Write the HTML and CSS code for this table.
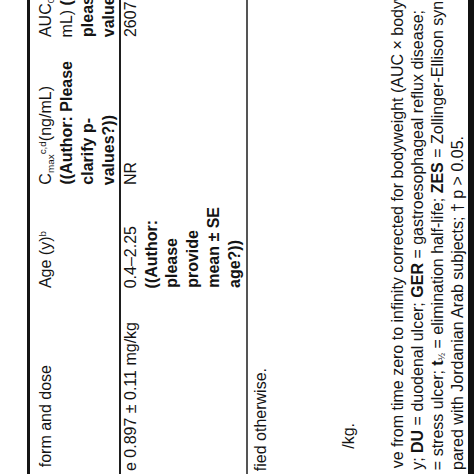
FILE: index.html
```html
<!DOCTYPE html>
<html>
<head>
<meta charset="utf-8">
<link rel="stylesheet" href="styles.css">
</head>
<body>
<div class="page">
  <div class="table">
    <div class="cell head c1 first">form and dose</div>
    <div class="cell head c2">Age (y)<sup>b</sup></div>
    <div class="cell head c3">C<sub>max</sub><sup>c,d</sup>(ng/mL)<br><b>((Author: Please<br>clarify p-<br>values?))</b></div>
    <div class="cell head c4">AUC<sub>0–∞</sub><sup>c</sup> (ng·h/<br>mL) <b>((Author:<br>please clarify p-<br>values?))</b></div>

    <div class="cell body c1 firstdata">e 0.897 ± 0.11 mg/kg</div>
    <div class="cell body c2">0.4–2.25<br><b>((Author:<br>please<br>provide<br>mean ± SE<br>age?))</b></div>
    <div class="cell body c3">NR</div>
    <div class="cell body c4">2607.</div>
  </div>

  <div class="notes">
    <p class="note n1">fied otherwise.</p>
    <p class="note n2">/kg.</p>
    <div class="note n3">
      <div class="line">ve from time zero to infinity corrected for bodyweight (AUC × bodyweight);</div>
      <div class="line">y; <b>DU</b> = duodenal ulcer; <b>GER</b> = gastroesophageal reflux disease;</div>
      <div class="line">= stress ulcer; <b>t</b><sub class="half">½</sub> = elimination half-life; <b>ZES</b> = Zollinger-Ellison syndrome;</div>
      <div class="line">pared with Jordanian Arab subjects; † p &gt; 0.05.</div>
    </div>
  </div>
  <div class="endrule"></div>
</div>
</body>
</html>
```
FILE: styles.css
```css
html, body {
  margin: 0;
  padding: 0;
  background: #fff;
  overflow: hidden;
  width: 474px;
  height: 474px;
}

/* The sheet is set sideways: lines run bottom-to-top, blocks stack left-to-right. */
.page {
  writing-mode: vertical-lr;
  writing-mode: sideways-lr;
  width: 474px;
  height: 474px;
  overflow: hidden;
  font-family: "Liberation Sans", Arial, sans-serif;
  font-size: 16px;
  color: #141414;
  background: #fff;
  display: flex;
  flex-direction: column;
}

.table {
  margin-block-start: 27px;
  display: grid;
  grid-template-columns: 186px 103px 148px 200px;
  white-space: nowrap;
}

.head {
  border-block-start: 3px solid #161616;
  border-block-end: 2px solid #1e1e1e;
  padding-block-start: 5px;
  line-height: 21px;
  block-size: 84px;
}

.body {
  line-height: 20.7px;
  padding-block-end: 1px;
  border-block-end: 2px solid #555;
  block-size: 124.2px;
}

.first {
  padding-inline-start: 7px;
}

.firstdata {
  padding-inline-start: 3px;
}

sub, sup {
  font-size: 0.62em;
  line-height: 0;
}

sub {
  vertical-align: -0.3em;
}

sup {
  vertical-align: 0.55em;
}

.notes {
  white-space: nowrap;
}

.note {
  margin: 0;
  line-height: 20px;
}

.n1 {
  margin-block-start: 3px;
  padding-inline-start: 3px;
}

.n2 {
  margin-block-start: 68px;
  padding-inline-start: 25px;
}

.n3 {
  margin-block-start: 28.5px;
}

.n3 .line {
  padding-inline-start: 4px;
}

.n3 .line:first-child {
  padding-inline-start: 6px;
}

.half {
  font-size: 0.55em;
}

.endrule {
  margin-block-start: 0.5px;
  block-size: 6px;
  background: #111;
}
```
